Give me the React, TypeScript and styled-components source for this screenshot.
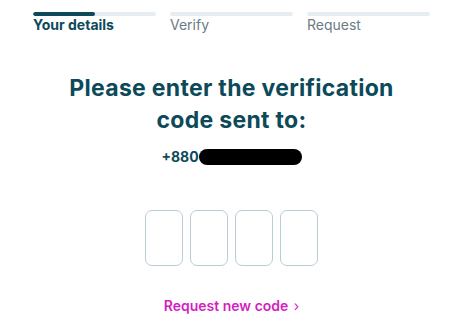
import styled, { createGlobalStyle } from 'styled-components';

const GlobalStyle = createGlobalStyle`
    body {
        margin: 0;
        background: #ffffff;
        font-family: Inter, 'Noto Sans', sans-serif;
    }
`;

const steps = [
    { label: 'Your details', progress: 50, active: true },
    { label: 'Verify', progress: 0, active: false },
    { label: 'Request', progress: 0, active: false },
];

function App() {
    return (
        <Page>
            <GlobalStyle />
            <Stepper>
                {steps.map((step) => (
                    <Step key={step.label}>
                        <Track>
                            <Fill style={{ width: `${step.progress}%` }} />
                        </Track>
                        <StepLabel $active={step.active}>{step.label}</StepLabel>
                    </Step>
                ))}
            </Stepper>

            <Content>
                <Title>
                    Please enter the verification
                    <br />
                    code sent to:
                </Title>
                <Phone>
                    +880
                    <Redacted />
                </Phone>

                <CodeRow>
                    {[0, 1, 2, 3].map((i) => (
                        <CodeBox key={i} maxLength={1} inputMode="numeric" />
                    ))}
                </CodeRow>

                <ResendLink href="#">
                    Request new code <Chevron>›</Chevron>
                </ResendLink>
            </Content>
        </Page>
    );
}

export default App;

const Page = styled.div`
    width: 475px;
    height: 326px;
    overflow: hidden;
    box-sizing: border-box;
    padding: 12px 45px 0 33px;
`;

const Stepper = styled.div`
    display: grid;
    grid-template-columns: repeat(3, 123px);
    column-gap: 14px;
`;

const Step = styled.div`
    display: flex;
    flex-direction: column;
`;

const Track = styled.div`
    height: 4px;
    border-radius: 2px;
    background: #e6edf1;
    overflow: hidden;
`;

const Fill = styled.div`
    height: 100%;
    border-radius: 2px;
    background: #0c4a5a;
`;

const StepLabel = styled.div<{ $active: boolean }>`
    margin-top: 0;
    font-size: 14px;
    line-height: 17px;
    font-weight: ${(p) => (p.$active ? 700 : 400)};
    color: ${(p) => (p.$active ? '#0c4a5a' : '#6b7c85')};
`;

/* centred column, sits slightly left of the window centre like the original */
const Content = styled.div`
    display: flex;
    flex-direction: column;
    align-items: center;
    margin-left: -33px;
    margin-right: -33px;
`;

const Title = styled.h1`
    margin: 39px 0 0;
    text-align: center;
    font-size: 23px;
    line-height: 32px;
    font-weight: 700;
    letter-spacing: 0.3px;
    color: #0c4a5a;
`;

const Phone = styled.div`
    display: flex;
    align-items: center;
    margin-top: 12px;
    font-size: 14px;
    font-weight: 700;
    color: #0c4a5a;
`;

const Redacted = styled.span`
    display: inline-block;
    width: 103px;
    height: 16px;
    border-radius: 8px;
    background: #000;
`;

const CodeRow = styled.div`
    display: flex;
    gap: 7px;
    margin-top: 45px;
`;

const CodeBox = styled.input`
    width: 38px;
    height: 56px;
    box-sizing: border-box;
    border: 1px solid #b9cdd5;
    border-radius: 7px;
    background: #fff;
    padding: 0;
    outline: none;
`;

const ResendLink = styled.a`
    margin-top: 31px;
    font-size: 14px;
    font-weight: 600;
    color: #d41ec0;
    text-decoration: none;
`;

const Chevron = styled.span`
    font-weight: 400;
    margin-left: 2px;
`;
